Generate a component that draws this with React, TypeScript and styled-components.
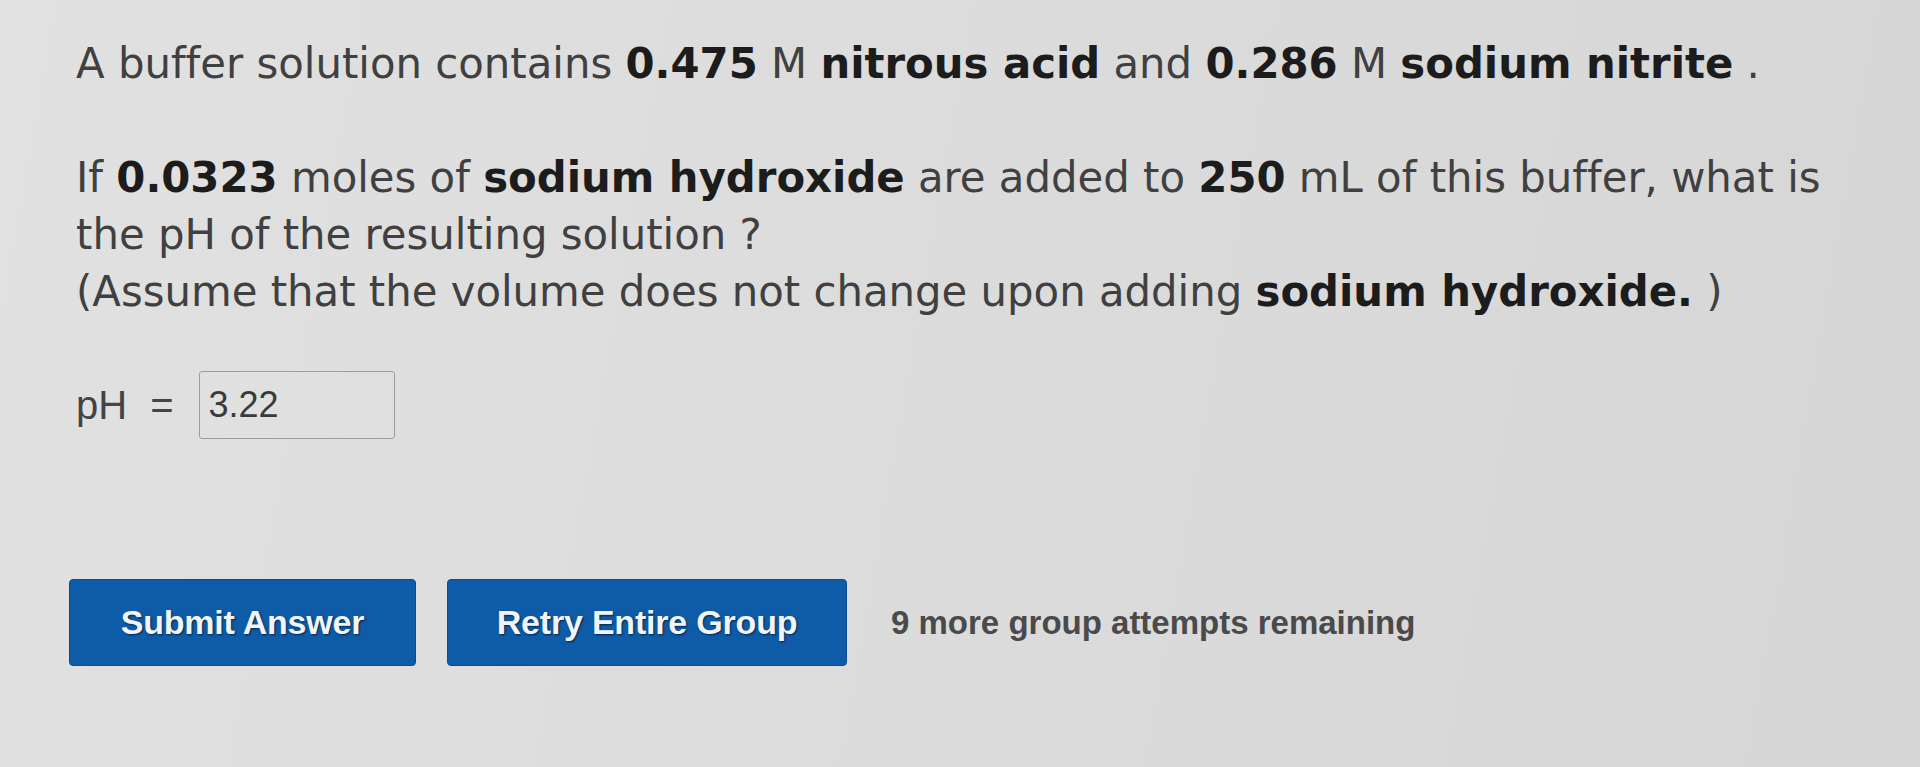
import React from 'react';
import styled, { createGlobalStyle } from 'styled-components';

// Buffer question card: prompt text, answer field and the action buttons

const GlobalStyle = createGlobalStyle`
  html, body {
    margin: 0;
    padding: 0;
  }
  body {
    background: #dcdcdc;
  }
`;

const Page = styled.div`
  box-sizing: border-box;
  min-height: 767px;
  padding-top: 35px;
  background: linear-gradient(100deg, #e1e1e1 0%, #dbdbdb 55%, #d6d6d6 100%);
`;

const Question = styled.div`
  width: 1780px;
  padding-left: 76px;
  font-family: "DejaVu Sans", Verdana, sans-serif;
  font-size: 41.8px;
  line-height: 57px;
  font-variant-ligatures: none;
  color: #404040;

  b {
    color: #1c1c1c;
    font-weight: bold;
  }
`;

const Paragraph = styled.p<{ $after?: number }>`
  margin: 0 0 ${p => p.$after ?? 0}px;
`;

const AnswerRow = styled.div`
  display: flex;
  align-items: center;
  margin-top: 51px;
  padding-left: 76px;
  font-family: "Liberation Sans", Arial, sans-serif;
  font-size: 40px;
  color: #444;
`;

const Equals = styled.span`
  margin: 0 25px 0 23px;
`;

const AnswerInput = styled.input`
  box-sizing: border-box;
  width: 196px;
  height: 68px;
  padding: 0 9px;
  border: 1px solid #9c9c9c;
  border-radius: 3px;
  background: rgba(255, 255, 255, 0.06);
  font-family: "Liberation Sans", Arial, sans-serif;
  font-size: 36px;
  color: #3a3a3a;
  outline: none;
`;

const Actions = styled.div`
  display: flex;
  align-items: center;
  gap: 31px;
  margin-top: 140px;
  padding-left: 69px;
`;

const ActionButton = styled.button<{ $width: number }>`
  box-sizing: border-box;
  width: ${p => p.$width}px;
  height: 87px;
  padding: 0;
  border: 1px solid #0a4e91;
  border-radius: 4px;
  background: #0e5ba8;
  color: #f1f4f8;
  font-family: "Liberation Sans", Arial, sans-serif;
  font-size: 34px;
  font-weight: bold;
  letter-spacing: -0.2px;
  text-shadow: 1px 1px 2px rgba(0, 0, 0, 0.6);
  cursor: pointer;
`;

const Remaining = styled.span`
  margin-left: 13px;
  font-family: "Liberation Sans", Arial, sans-serif;
  font-size: 33px;
  font-weight: bold;
  color: #4a4a4a;
`;

export default function App() {
  return (
    <Page>
      <GlobalStyle />
      <Question>
        <Paragraph $after={57}>
          A buffer solution contains <b>0.475</b> M <b>nitrous acid</b> and <b>0.286</b> M{' '}
          <b>sodium nitrite</b> .
        </Paragraph>
        <Paragraph>
          If <b>0.0323</b> moles of <b>sodium hydroxide</b> are added to <b>250</b> mL of this
          buffer, what is
          <br />
          the pH of the resulting solution ?
          <br />
          (Assume that the volume does not change upon adding <b>sodium hydroxide.</b> )
        </Paragraph>
      </Question>

      <AnswerRow>
        <span>pH</span>
        <Equals>=</Equals>
        <AnswerInput defaultValue="3.22" />
      </AnswerRow>

      <Actions>
        <ActionButton $width={347}>Submit Answer</ActionButton>
        <ActionButton $width={400}>Retry Entire Group</ActionButton>
        <Remaining>9 more group attempts remaining</Remaining>
      </Actions>
    </Page>
  );
}
